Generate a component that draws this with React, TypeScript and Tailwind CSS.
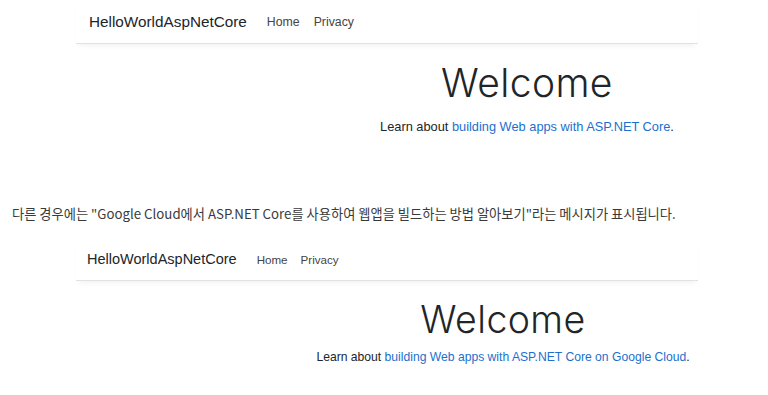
import React from 'react';

const sans = { fontFamily: '"Liberation Sans", Arial, sans-serif' };
const display = { fontFamily: 'Inter, "Liberation Sans", sans-serif' };

interface NavProps {
  brandSize: string;
  linkSize: string;
  padLeft: string;
  linkGap: string;
}

const NavBar = ({ brandSize, linkSize, padLeft, linkGap }: NavProps) => (
  <nav
    className={`ml-[76px] w-[622px] h-[44px] pt-[2px] flex items-center border-b border-[#e2e2e2] shadow-[0_4px_6px_-3px_rgba(0,0,0,0.07)] ${padLeft}`}
  >
    <span className={`${brandSize} text-[#212529]`}>HelloWorldAspNetCore</span>
    <div className={`flex ml-[20px] ${linkGap}`}>
      <span className={`${linkSize} text-[#444]`}>Home</span>
      <span className={`${linkSize} text-[#444]`}>Privacy</span>
    </div>
  </nav>
);

export default function App() {
  return (
    <div className="w-[768px] h-[395px] bg-white overflow-hidden" style={sans}>
      {/* first capture */}
      <NavBar brandSize="text-[15.3px]" linkSize="text-[12.3px]" padLeft="pl-[13px]" linkGap="gap-[14px]" />
      <div className="ml-[356px] w-[342px] flex flex-col items-center">
        <h1 className="mt-[19px] text-[39px] leading-[39px] font-light tracking-[0.4px] text-[#212529]" style={display}>
          Welcome
        </h1>
        <p className="mt-[16px] text-[12.8px] leading-[18px] text-[#212529] whitespace-nowrap">
          Learn about <span className="text-[#1d6fce]">building Web apps with ASP.NET Core</span>.
        </p>
      </div>

      <p
        className="mt-[68px] pl-[12px] text-[13.25px] leading-[20px] text-[#3a3a3a] whitespace-nowrap"
        style={{ fontFamily: '"Noto Sans CJK KR", "Noto Sans", sans-serif' }}
      >
        다른 경우에는 "Google Cloud에서 ASP.NET Core를 사용하여 웹앱을 빌드하는 방법 알아보기"라는 메시지가 표시됩니다.
      </p>

      {/* second capture */}
      <div className="mt-[13px]">
        <NavBar brandSize="text-[14.5px]" linkSize="text-[11.6px]" padLeft="pl-[11px]" linkGap="gap-[13px]" />
      </div>
      <div className="ml-[308px] w-[390px] flex flex-col items-center">
        <h1 className="mt-[20px] text-[37.5px] leading-[37.5px] font-light tracking-[0.4px] text-[#212529]" style={display}>
          Welcome
        </h1>
        <p className="mt-[9.5px] text-[12.15px] leading-[18px] text-[#212529] whitespace-nowrap">
          Learn about <span className="text-[#1d6fce]">building Web apps with ASP.NET Core on Google Cloud</span>.
        </p>
      </div>
    </div>
  );
}
